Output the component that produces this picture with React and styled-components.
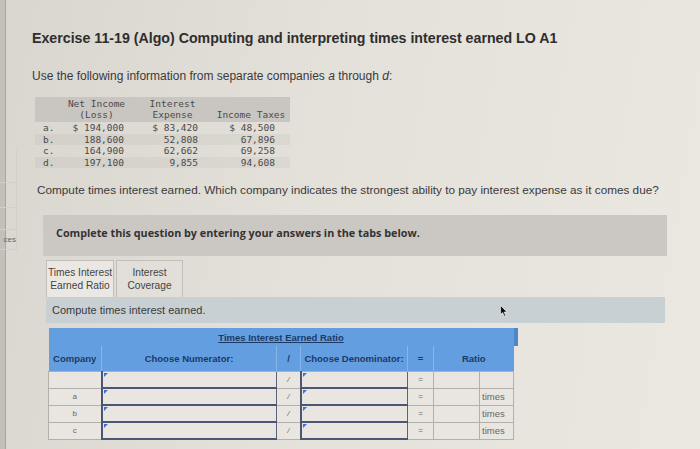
import React from 'react';
import styled, { createGlobalStyle } from 'styled-components';

const ink = '#333';
const navy = '#1d3966';
const headBlue = '#639fe0';

const GlobalStyle = createGlobalStyle`
  html, body {
    margin: 0;
    padding: 0;
  }
  body {
    background: linear-gradient(100deg, #d9d5cf 0%, #e4e0da 45%, #ebe8e2 100%);
    font-family: "Liberation Sans", Arial, sans-serif;
    color: ${ink};
  }
`;

const Page = styled.div`
  display: flex;
  width: 700px;
  height: 449px;
  overflow: hidden;
`;

const Sidebar = styled.aside`
  width: 17px;
  flex-shrink: 0;
  box-sizing: border-box;
  border-left: 5px solid #c3bfb9;
  box-shadow: inset 1px 0 0 #a9a6a0;
  padding-top: 150px;
`;

const SideItem = styled.div`
  height: ${({ h }) => h}px;
  border-bottom: 1px solid #d2cec8;
  border-right: 1px solid #d2cec8;
  font-size: 8px;
  color: #666;
  line-height: ${({ h }) => h}px;
  overflow: hidden;
  text-align: right;
  white-space: nowrap;
  margin-left: -5px;
`;

const Main = styled.main`
  flex: 1;
  padding: 30px 0 0 15px;
`;

const Title = styled.h1`
  margin: 0;
  font-size: 14.2px;
  line-height: 17px;
  font-weight: bold;
  color: #2e2e2e;
`;

const Text = styled.p`
  margin: ${({ mt }) => mt}px 0 0 ${({ ml }) => ml || 0}px;
  font-size: ${({ size }) => size || 12}px;
  line-height: 15px;
  color: #3a3a3a;
`;

const DataTable = styled.table`
  margin: 13px 0 0 3px;
  border-collapse: collapse;
  font-family: "DejaVu Sans Mono", "Liberation Mono", monospace;
  font-size: 9.5px;
  color: #4a4a4a;

  thead th {
    background: #c9c6c1;
    font-weight: normal;
    text-align: center;
    vertical-align: bottom;
    line-height: 11px;
    padding: 1px 0 2px;
  }
  tbody td {
    line-height: 11.5px;
    padding: 0;
    text-align: right;
  }
  tbody tr:nth-child(even) td {
    background: rgba(0, 0, 0, 0.035);
  }
`;

const Col = styled.col`
  width: ${({ w }) => w}px;
`;

const Val = styled.td`
  && {
    padding-right: ${({ pr }) => pr}px;
  }
`;

const Letter = styled.td`
  && {
    text-align: left;
    padding-left: 8px;
  }
`;

const QuestionBox = styled.div`
  margin: 18px 0 0 11px;
  width: 624px;
  height: 41px;
  box-sizing: border-box;
  background: #cbc8c3;
  padding: 11px 0 0 13px;
  font-family: "Open Sans", "Liberation Sans", sans-serif;
  font-weight: bold;
  font-size: 10.8px;
  line-height: 13px;
  color: #333;
`;

const Tabs = styled.div`
  display: flex;
  gap: 2px;
  margin: 4px 0 0 14px;
  height: 37px;
`;

const Tab = styled.div`
  width: ${({ w }) => w}px;
  box-sizing: border-box;
  border: 1px solid #c2bfba;
  border-bottom: none;
  background: ${({ active }) => (active ? '#ebe8e3' : '#e2dfd9')};
  text-align: center;
  font-size: 10.2px;
  line-height: 13px;
  padding-top: 5px;
  color: #444;
`;

const Panel = styled.div`
  position: relative;
  margin-left: 14px;
  width: 619px;
  height: 26px;
  box-sizing: border-box;
  background: #c9d0d3;
  padding: 6px 0 0 6px;
  font-size: 11px;
  line-height: 14px;
  color: #3a3a3a;
`;

const Cursor = styled.svg`
  position: absolute;
  left: 454px;
  top: 8px;
`;

const Grid = styled.table`
  margin: 5px 0 0 16px;
  border-collapse: collapse;
  table-layout: fixed;
  width: 465px;
  font-size: 9.5px;
`;

const Caption = styled.th`
  height: 18px;
  padding: 0;
  background: ${headBlue};
  color: ${navy};
  font-weight: bold;
  text-decoration: underline;
  box-shadow: 4px 0 0 #4f86c4;
`;

const Head = styled.th`
  height: 25px;
  padding: 0;
  background: ${headBlue};
  color: ${navy};
  font-weight: bold;
  border-left: 1px solid #86b6ea;
  &:first-child {
    border-left: none;
  }
`;

const Cell = styled.td`
  position: relative;
  height: 15px;
  padding: 0;
  background: #e9e6e1;
  border: 1px solid #b3b0ab;
  text-align: ${({ align }) => align || 'center'};
  padding-left: ${({ align }) => (align === 'left' ? '2px' : '0')};
  color: #666;
  font-size: ${({ small }) => (small ? '8px' : '9.5px')};
  font-style: ${({ italic }) => (italic ? 'italic' : 'normal')};
`;

const InputCell = styled(Cell)`
  border-left: 2px solid #4a5673;
  border-bottom: 2px solid #4a5673;
  border-right: 1.5px solid #5a6378;

  &::before {
    content: '';
    position: absolute;
    left: 1px;
    top: 1px;
    border-top: 4px solid #3f6fd0;
    border-right: 4px solid transparent;
  }
`;

const rows = [
  ['a.', '$ 194,000', '$ 83,420', '$ 48,500'],
  ['b.', '188,600', '52,808', '67,896'],
  ['c.', '164,900', '62,662', '69,258'],
  ['d.', '197,100', '9,855', '94,608'],
];

const companies = ['', 'a', 'b', 'c'];

const App = () => (
  <>
    <GlobalStyle />
    <Page>
      <Sidebar>
        <SideItem h={32} />
        <SideItem h={24} />
        <SideItem h={21} />
        <SideItem h={19}>ces</SideItem>
      </Sidebar>
      <Main>
        <Title>Exercise 11-19 (Algo) Computing and interpreting times interest earned LO A1</Title>
        <Text mt={22}>
          Use the following information from separate companies <i>a</i> through <i>d</i>:
        </Text>
        <DataTable>
          <colgroup>
            <Col w={25} />
            <Col w={73} />
            <Col w={79} />
            <Col w={78} />
          </colgroup>
          <thead>
            <tr>
              <th />
              <th>Net Income<br />(Loss)</th>
              <th>Interest<br />Expense</th>
              <th>Income Taxes</th>
            </tr>
          </thead>
          <tbody>
            {rows.map(([l, ni, ie, it]) => (
              <tr key={l}>
                <Letter>{l}</Letter>
                <Val pr={9}>{ni}</Val>
                <Val pr={14}>{ie}</Val>
                <Val pr={15}>{it}</Val>
              </tr>
            ))}
          </tbody>
        </DataTable>
        <Text mt={14} ml={5} size={11.75}>
          Compute times interest earned. Which company indicates the strongest ability to pay interest expense as it comes due?
        </Text>
        <QuestionBox>Complete this question by entering your answers in the tabs below.</QuestionBox>
        <Tabs>
          <Tab w={68} active>Times Interest<br />Earned Ratio</Tab>
          <Tab w={67}>Interest<br />Coverage</Tab>
        </Tabs>
        <Panel>
          Compute times interest earned.
          <Cursor width="8" height="12" viewBox="0 0 8 12">
            <path d="M0.5 0.5 L0.5 9.5 L2.6 7.6 L4.2 11.2 L5.6 10.6 L4.1 7.1 L7 7 Z" fill="#111" stroke="#fff" strokeWidth="0.6" />
          </Cursor>
        </Panel>
        <Grid>
          <colgroup>
            <Col w={53} />
            <Col w={175} />
            <Col w={24} />
            <Col w={107} />
            <Col w={26} />
            <Col w={46} />
            <Col w={34} />
          </colgroup>
          <thead>
            <tr>
              <Caption colSpan={7}>Times Interest Earned Ratio</Caption>
            </tr>
            <tr>
              <Head>Company</Head>
              <Head>Choose Numerator:</Head>
              <Head>/</Head>
              <Head>Choose Denominator:</Head>
              <Head>=</Head>
              <Head colSpan={2}>Ratio</Head>
            </tr>
          </thead>
          <tbody>
            {companies.map((c, i) => (
              <tr key={i}>
                <Cell small>{c}</Cell>
                <InputCell />
                <Cell small italic>/</Cell>
                <InputCell />
                <Cell small>=</Cell>
                <Cell />
                <Cell align="left">{c ? 'times' : ''}</Cell>
              </tr>
            ))}
          </tbody>
        </Grid>
      </Main>
    </Page>
  </>
);

export default App;
